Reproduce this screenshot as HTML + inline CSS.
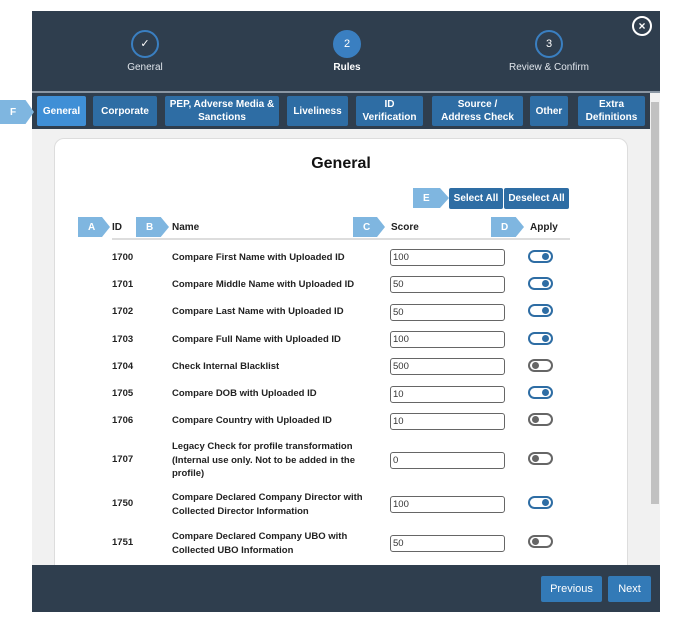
<!DOCTYPE html>
<html><head><style>
*{box-sizing:border-box;margin:0;padding:0}
body{width:689px;height:628px;background:#fff;font-family:"Liberation Sans",sans-serif;position:relative;overflow:hidden}
.abs{position:absolute}
.panel{left:32px;top:11px;width:628px;height:601px;background:#2f3e4e}
.content{left:32px;top:129px;width:618px;height:436px;background:#f1f1f1}
.scroll{left:650px;top:93px;width:10px;height:472px;background:#f1f1f1}
.thumb{left:651px;top:102px;width:8px;height:402px;background:#c1c1c1}
.circ{width:28px;height:28px;border-radius:50%;border:2px solid #3a7fc1;color:#fff;font-size:11px;text-align:center;line-height:24px}
.slab{color:#dfe4ea;font-size:10px;text-align:center;width:140px}
.tab{top:96px;height:30px;background:#2e6da4;color:#fff;font-weight:bold;font-size:10px;display:flex;align-items:center;justify-content:center;text-align:center;line-height:13px;border-radius:2px}
.card{left:54px;top:138px;width:574px;height:440px;background:#fff;border:1px solid #ddd;border-radius:10px}
.lab{height:20px;background:#7fb6e0;color:#fff;font-weight:bold;font-size:10px;display:flex;align-items:center;padding-left:10px;clip-path:polygon(0 0,75% 0,100% 50%,75% 100%,0 100%)}
.hd{font-weight:bold;font-size:10px;color:#222;top:222px}
.id{left:112px;font-weight:bold;font-size:9.5px;color:#222}
.nm{left:172px;font-weight:bold;font-size:9.5px;color:#222;width:210px;line-height:13.5px}
.in{left:390px;width:115px;height:17px;border:1px solid #666;border-radius:3px;font-size:9.5px;padding-left:2px;line-height:15px;color:#333}
.tg{left:528px;width:25px;height:13px;border-radius:7px;border:2px solid #2e6da4}
.tg::after{content:"";position:absolute;top:1px;right:2px;width:7px;height:7px;border-radius:50%;background:#2e6da4}
.tg.off{border-color:#666}
.tg.off::after{background:#666;right:auto;left:2px}
.btn{height:26px;background:#337ab7;color:#fff;font-size:11px;line-height:26px;text-align:center;border-radius:2px}
</style></head><body>
<div class="abs panel"></div>
<div class="abs" style="left:32px;top:91px;width:628px;height:2px;background:#8a96a3"></div>
<div class="abs" style="left:632px;top:16px;width:20px;height:20px;border:2px solid #fff;border-radius:50%;color:#fff;font-size:12px;font-weight:bold;text-align:center;line-height:16px">×</div>
<div class="abs circ" style="left:131px;top:30px">✓</div>
<div class="abs circ" style="left:333px;top:30px;background:#3a7fc1">2</div>
<div class="abs circ" style="left:535px;top:30px">3</div>
<div class="abs slab" style="left:75px;top:62px">General</div>
<div class="abs slab" style="left:277px;top:62px;color:#fff;font-weight:bold">Rules</div>
<div class="abs slab" style="left:479px;top:62px">Review &amp; Confirm</div>
<div class="abs content"></div>
<div class="abs scroll"></div><div class="abs thumb"></div>
<div class="abs tab" style="left:37px;width:49px;background:#3f8fd6">General</div>
<div class="abs tab" style="left:93px;width:64px">Corporate</div>
<div class="abs tab" style="left:165px;width:114px">PEP, Adverse Media &amp;<br>Sanctions</div>
<div class="abs tab" style="left:287px;width:61px">Liveliness</div>
<div class="abs tab" style="left:356px;width:67px">ID<br>Verification</div>
<div class="abs tab" style="left:432px;width:91px">Source /<br>Address Check</div>
<div class="abs tab" style="left:530px;width:38px">Other</div>
<div class="abs tab" style="left:578px;width:67px">Extra<br>Definitions</div>
<div class="abs lab" style="left:0;top:100px;width:34px;height:24px">F</div>
<div class="abs card"></div>
<div class="abs" style="left:54px;top:155px;width:574px;text-align:center;font-weight:bold;font-size:16px;color:#111">General</div>
<div class="abs lab" style="left:413px;top:188px;width:36px">E</div>
<div class="abs btn" style="left:449px;top:188px;width:54px;height:21px;line-height:21px;font-size:10px;font-weight:bold;background:#2e6da4">Select All</div>
<div class="abs btn" style="left:504px;top:188px;width:65px;height:21px;line-height:21px;font-size:10px;font-weight:bold;background:#2e6da4">Deselect All</div>
<div class="abs lab" style="left:78px;top:217px;width:32px">A</div>
<div class="abs lab" style="left:136px;top:217px;width:33px">B</div>
<div class="abs lab" style="left:353px;top:217px;width:32px">C</div>
<div class="abs lab" style="left:491px;top:217px;width:33px">D</div>
<div class="abs hd" style="left:112px">ID</div>
<div class="abs hd" style="left:172px">Name</div>
<div class="abs hd" style="left:391px">Score</div>
<div class="abs hd" style="left:530px">Apply</div>
<div class="abs" style="left:112px;top:238px;width:458px;height:2px;background:#ddd"></div>

<div class="abs id" style="top:252px">1700</div><div class="abs nm" style="top:251px">Compare First Name with Uploaded ID</div><div class="abs in" style="top:249px">100</div><div class="abs tg" style="top:250px"></div>
<div class="abs id" style="top:279px">1701</div><div class="abs nm" style="top:278px">Compare Middle Name with Uploaded ID</div><div class="abs in" style="top:276px">50</div><div class="abs tg" style="top:277px"></div>
<div class="abs id" style="top:306px">1702</div><div class="abs nm" style="top:305px">Compare Last Name with Uploaded ID</div><div class="abs in" style="top:304px">50</div><div class="abs tg" style="top:304px"></div>
<div class="abs id" style="top:334px">1703</div><div class="abs nm" style="top:333px">Compare Full Name with Uploaded ID</div><div class="abs in" style="top:331px">100</div><div class="abs tg" style="top:332px"></div>
<div class="abs id" style="top:361px">1704</div><div class="abs nm" style="top:360px">Check Internal Blacklist</div><div class="abs in" style="top:358px">500</div><div class="abs tg off" style="top:359px"></div>
<div class="abs id" style="top:388px">1705</div><div class="abs nm" style="top:387px">Compare DOB with Uploaded ID</div><div class="abs in" style="top:386px">10</div><div class="abs tg" style="top:386px"></div>
<div class="abs id" style="top:415px">1706</div><div class="abs nm" style="top:414px">Compare Country with Uploaded ID</div><div class="abs in" style="top:413px">10</div><div class="abs tg off" style="top:413px"></div>
<div class="abs id" style="top:454px">1707</div><div class="abs nm" style="top:440px">Legacy Check for profile transformation (Internal use only. Not to be added in the profile)</div><div class="abs in" style="top:452px">0</div><div class="abs tg off" style="top:452px"></div>
<div class="abs id" style="top:498px">1750</div><div class="abs nm" style="top:491px">Compare Declared Company Director with Collected Director Information</div><div class="abs in" style="top:496px">100</div><div class="abs tg" style="top:496px"></div>
<div class="abs id" style="top:537px">1751</div><div class="abs nm" style="top:530px">Compare Declared Company UBO with Collected UBO Information</div><div class="abs in" style="top:535px">50</div><div class="abs tg off" style="top:535px"></div>

<div class="abs" style="left:32px;top:565px;width:628px;height:47px;background:#2f3e4e"></div>
<div class="abs btn" style="left:541px;top:576px;width:61px">Previous</div>
<div class="abs btn" style="left:608px;top:576px;width:43px">Next</div>
</body></html>
